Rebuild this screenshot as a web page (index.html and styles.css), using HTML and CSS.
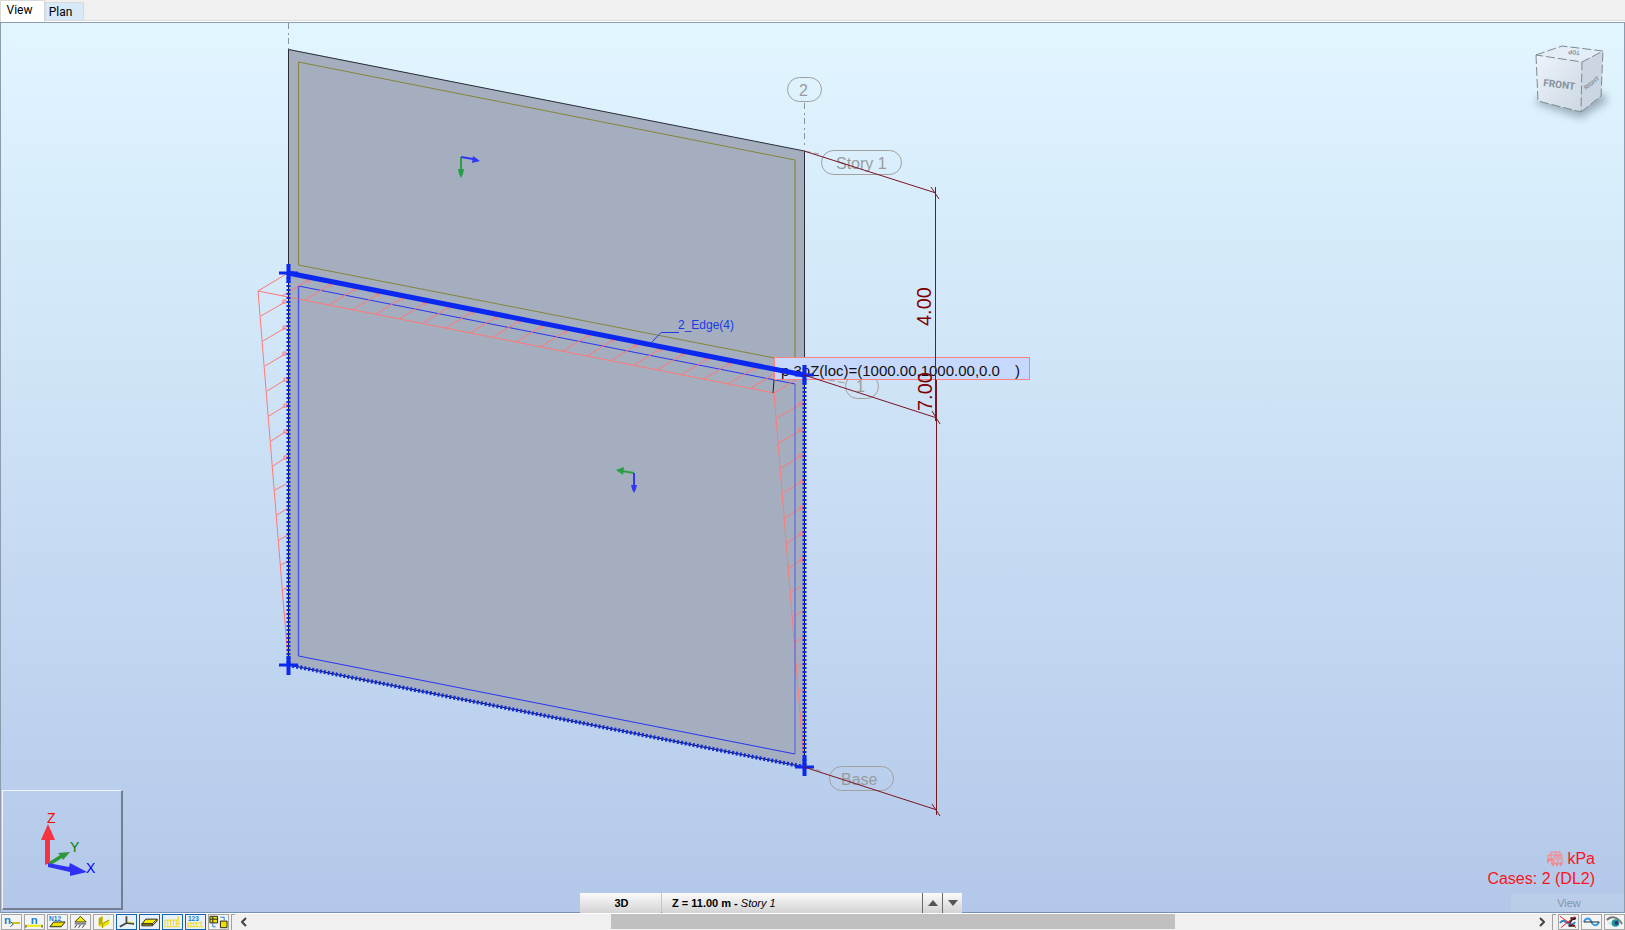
FILE: index.html
```html
<!DOCTYPE html>
<html lang="en">

<head>
    <meta charset="UTF-8">
    <meta name="viewport" content="width=device-width, initial-scale=1.0">
    <title>View</title>
    <link rel="stylesheet" href="styles.css">
</head>

<body>
    <nav class="tabs">
        <button class="tab tab-active">View</button>
        <button class="tab">Plan</button>
    </nav>

    <main class="viewport">
        <svg class="scene" viewBox="1 23 1623 889" preserveAspectRatio="xMinYMin meet">
            <defs>
                <!-- load falling to zero along a vertical edge -->
                <g id="side-load" class="load">
                    <path d="M288 273L258 291L288 660" />
                    <path d="M261 316L285 302M263 341L285 328M265 366L285 354M267 391L285 380M269 416L285 406M271 441L285 432M273 466L285 458M275 490L286 484M277 515L288 508M279 540L288 535M281 565L288 561M283 590L288 587M285 615L288 613" />
                    <path d="M283 300h3v3h-3zM283 326h3v3h-3zM283 352h3v3h-3zM284 378h3v3h-3zM284 404h3v3h-3zM284 430h3v3h-3zM284 456h3v3h-3z" />
                </g>
            </defs>

            <!-- wall panels -->
            <path class="wall" d="M288 49L804 151V767L288 665Z" />
            <path class="wall-edge" d="M288.500 273V49.500L804.500 151V375" />
            <path class="inner-olive" d="M795 160L298.500 62V265L795 362" />
            <path class="inner-olive-soft" d="M795 160V362" />
            <path class="inner-blue" d="M795 384L298.500 286V656L795 754" />

            <!-- grid axes and story labels -->
            <path class="axis-line" d="M288.500 23V49M804.500 103V148" />
            <g class="bubble">
                <rect x="787.500" y="77.500" width="34" height="24" rx="12" />
                <rect x="821.500" y="150.500" width="80" height="24" rx="12" />
                <rect x="845.500" y="374.500" width="33" height="24" rx="12" />
                <rect x="829.500" y="766.500" width="64" height="24" rx="12" />
                <path d="M804 151l15 3M818 378l27 5M806 767l15 4" stroke-dasharray="7 3" />
            </g>
            <g class="bubble-text">
                <text x="799" y="96">2</text>
                <text x="836" y="169">Story 1</text>
                <text x="856" y="392">1</text>
                <text x="841" y="785">Base</text>
            </g>

            <!-- loads -->
            <use href="#side-load" />
            <use href="#side-load" x="516" y="102" />
            <g class="load">
                <path d="M258 291L774 393" />
                <path d="M282 296l28-17m-5 1l5-1-2 4M305 300l28-17m-5 1l5-1-2 4M329 305l28-17m-5 1l5-1-2 4M352 310l28-17m-5 1l5-1-2 4M376 314l28-17m-5 1l5-1-2 4M399 319l28-17m-5 1l5-1-2 4M423 323l28-17m-5 1l5-1-2 4M446 328l28-17m-5 1l5-1-2 4M470 333l28-17m-5 1l5-1-2 4M493 337l28-17m-5 1l5-1-2 4M516 342l28-17m-5 1l5-1-2 4M540 347l28-17m-5 1l5-1-2 4M563 351l28-17m-5 1l5-1-2 4M587 356l28-17m-5 1l5-1-2 4M610 361l28-17m-5 1l5-1-2 4M634 365l28-17m-5 1l5-1-2 4M657 370l28-17m-5 1l5-1-2 4M681 375l28-17m-5 1l5-1-2 4M704 379l28-17m-5 1l5-1-2 4M728 384l28-17m-5 1l5-1-2 4M751 388l28-17" />
            </g>
            <path class="inner-blue-soft" d="M298.500 286V656M795 384V754" />

            <!-- load value -->
            <rect class="load-box" x="774.500" y="357.500" width="255" height="22" />
            <text class="load-text" x="781" y="376">p 3pZ(loc)=(1000.00,1000.00,0.0<tspan x="1015">)</tspan></text>
            <path class="leader" d="M774 380L773 393" />

            <!-- selected edge and supports -->
            <path class="support-core" d="M288.500 273V665L804.500 767V375" />
            <path class="support" d="M288.500 273V665L804.500 767V375" />
            <path class="edge" d="M288 273L804 375" />
            <path class="cross" d="M279 273H298M279 665H298M795 375H814M795 767H814" />
            <path class="cross cross-v" d="M288.500 264V283M288.500 656V675M804.500 365V384M804.500 757V776" />
            <path class="edge-leader" d="M652 342L661 332.500H679" />
            <text class="edge-text" x="678" y="329">2_Edge(4)</text>

            <!-- dimensions -->
            <g class="dim">
                <path d="M804 151L936 193M804 375L937 418M804 767L937 810" />
                <path d="M935.500 187V421M936.500 380V815" />
                <path d="M931 187L939 199M932 411L940 424M932 804L940 816" />
            </g>
            <g class="dim-text">
                <text transform="translate(931 326) rotate(-90)">4.00</text>
                <text transform="translate(932 411) rotate(-90)">7.00</text>
            </g>

            <!-- local axes of the panels -->
            <path class="local-green" d="M461 157V170" />
            <path class="fill-green" d="M458 169h6l-1 5-2 4-2-4z" />
            <path class="local-blue" d="M461 157L473 159" />
            <path class="fill-blue" d="M473 156l7 5-8 2z" />
            <path class="local-green" d="M634 473L622 471" />
            <path class="fill-green" d="M624 467l-8 3 7 5z" />
            <path class="local-blue" d="M634 473V486" />
            <path class="fill-blue" d="M631 485h6l-1 4-2 4-2-4z" />
        </svg>

        <svg class="cube" viewBox="1528 38 88 86">
            <defs>
                <filter id="soft" x="-30%" y="-50%" width="160%" height="200%">
                    <feGaussianBlur stdDeviation="4" />
                </filter>
                <linearGradient id="face" x1="0" y1="0" x2="1" y2="1">
                    <stop offset="0" stop-color="#edf3fa" />
                    <stop offset="1" stop-color="#cdd8e3" />
                </linearGradient>
            </defs>
            <path d="M1535 103L1581 118L1609 100L1595 90L1545 92Z" fill="#7d8f9c" opacity=".7" filter="url(#soft)" />
            <path d="M1536 55L1562 46L1603 51L1582 62Z" fill="#e3edf6" />
            <path d="M1536 55L1582 62L1581 112L1538 101Z" fill="url(#face)" />
            <path d="M1582 62L1603 51L1601 96L1581 112Z" fill="#cbd6e2" />
            <path d="M1536 55L1562 46L1603 51L1582 62ZL1538 101L1581 112L1582 62M1581 112L1601 96L1603 51" fill="none" stroke="#7f8a93" stroke-dasharray="9 3" />
            <text class="cube-front" transform="translate(1543 86) rotate(7)">FRONT</text>
            <text class="cube-side" transform="translate(1586 90) rotate(-38)">RIGHT</text>
            <text class="cube-side" transform="translate(1580 51) rotate(186)">TOP</text>
        </svg>

        <div class="axis-box">
            <svg viewBox="3 791 118 117">
                <path d="M45 865V840H41L48 824L55 840H50V863Z" fill="#f5333f" />
                <path d="M49 862L60 855L58 853L70 852L63 860L62 858L51 865Z" fill="#2f963b" />
                <path d="M48 863L69 867L70 863L87 872L70 876V872L48 867Z" fill="#3030f5" />
                <text x="47" y="823" fill="#f00">Z</text>
                <text x="70" y="852" fill="#008000">Y</text>
                <text x="86" y="873" fill="#00f">X</text>
            </svg>
        </div>

        <div class="units">
            <div class="unit">
                <svg width="16" height="16" viewBox="0 0 16 16" fill="none" stroke="#ff8080">
                    <path d="M1 8V4h3M4 9V1h9v8M4 4h11v8M7 12V4M11 12V4M9 1v8" />
                    <path d="M0 8h3l-2 4zM4 12h3l-1 3zM8 12h3l-1 3zM12 12h3l-1 3zM3 8h3l-1 3z" fill="#ff8080" />
                </svg>
                <span>kPa</span>
            </div>
            <div>Cases: 2 (DL2)</div>
        </div>

        <div class="level-bar">
            <button class="mode">3D</button>
            <button class="level">Z = 11.00 m - <i>Story 1</i></button>
            <button class="step" aria-label="Story up"><svg width="10" height="6"><path d="M0 6L5 0L10 6Z" /></svg></button>
            <button class="step" aria-label="Story down"><svg width="10" height="6"><path d="M0 0H10L5 6Z" /></svg></button>
        </div>
        <button class="view-button">View</button>
    </main>

    <footer class="bottom-bar">
        <div class="tools">
            <button class="tool" aria-label="Node numbers"><svg viewBox="0 0 20 14"><text x="2" y="9" class="glyph">n</text><path d="M9 7l3 2-3 3" stroke="#333" fill="none" /><path d="M11 8h8" stroke="#c8c000" stroke-width="2" /></svg></button>
            <button class="tool" aria-label="Bar numbers"><svg viewBox="0 0 20 14"><text x="6" y="9" class="glyph">n</text><path d="M1 11h17" stroke="#f0e800" stroke-width="2" /><path d="M1 10v3M18 10v3" stroke="#333" /></svg></button>
            <button class="tool" aria-label="Panel numbers"><svg viewBox="0 0 20 14"><text x="1" y="6" class="glyph-small">N12</text><path d="M6 7h12l-4 5H2z" fill="#e8e000" stroke="#222" /></svg></button>
            <button class="tool" aria-label="Supports"><svg viewBox="0 0 20 14"><path d="M10 1l6 6H4z" fill="#f5ec00" stroke="#333" /><path d="M4 9h12M6 10l-2 3M10 10l-2 3M14 10l-2 3" stroke="#333" fill="none" /></svg></button>
            <button class="tool" aria-label="Section shape"><svg viewBox="0 0 20 14"><path d="M5 3l4-2v7l7-4v5l-7 4-4-2z" fill="#f0e400" /><path d="M5 3l4-2v7l-4 3z" fill="#b8ac10" /><path d="M9 13v-4l7-4" stroke="#99900c" fill="none" /></svg></button>
            <button class="tool tool-on" aria-label="Local systems"><svg viewBox="0 0 20 14"><path d="M10 1v7l8 1M10 8l-7 4" stroke="#444" stroke-width="2" fill="none" /><path d="M11 2v5l6 1" stroke="#d8cc10" fill="none" /></svg></button>
            <button class="tool tool-on" aria-label="Panel thickness"><svg viewBox="0 0 20 14"><path d="M6 4h12l-5 5H2zM2 9h11v2H2zM13 11l5-5V4" fill="#f5ec00" stroke="#222" /></svg></button>
            <button class="tool tool-on" aria-label="Load symbols"><svg viewBox="0 0 20 14"><path d="M2 11V5h14V1M5 11V5M8 11V5M11 11V5M14 11V5M16 1v9m-2-2l2 2 2-2M1 12h17" stroke="#f0d820" fill="none" /></svg></button>
            <button class="tool tool-on" aria-label="Load values"><svg viewBox="0 0 20 14"><text x="2" y="6" class="glyph-small">123</text><path d="M2 12V8h14M5 12V8M8 12V8M11 12V8M16 6v6M1 12h17" stroke="#f0d820" fill="none" /></svg></button>
            <button class="tool" aria-label="Display tables"><svg viewBox="0 0 20 14"><path d="M1 1h8v7H1zM1 4h8M4 1v7M12 6h7v7h-7z" fill="#e8e000" stroke="#222" /><path d="M12 2h4v3M7 12H4V9" stroke="#1d7fd0" fill="none" /></svg></button>
            <span class="divider"></span>
        </div>
        <div class="scroll">
            <button class="arrow" aria-label="Scroll left"><svg width="6" height="10"><path d="M5 1L1 5L5 9" /></svg></button>
            <div class="track"><div class="thumb"></div></div>
            <button class="arrow" aria-label="Scroll right"><svg width="6" height="10"><path d="M1 1L5 5L1 9" /></svg></button>
        </div>
        <div class="tools">
            <span class="divider"></span>
            <button class="tool" aria-label="Hide supports"><svg viewBox="0 0 20 14"><path d="M1 8c3-4 5-2 8 0s6 2 8-1" stroke="#2a7fc8" stroke-width="2" fill="none" /><path d="M11 8l3-4h3M12 3h6M10 11h7" stroke="#222" stroke-width="2" fill="none" /><path d="M1 1l17 12M17 1L2 13" stroke="#f01818" fill="none" /></svg></button>
            <button class="tool" aria-label="Deformation"><svg viewBox="0 0 20 14"><path d="M2 7c2-5 6-5 8 0s6 4 8 0" stroke="#3a9be0" stroke-width="2" fill="none" /><path d="M2 7h16" stroke="#222" /></svg></button>
            <button class="tool" aria-label="Visibility"><svg viewBox="0 0 20 14"><path d="M2 5c4-5 11-4 16 4" stroke="#777" stroke-width="2" fill="none" /><path d="M3 8c4-3 9-4 14 1-3 4-9 4-14-1z" fill="#d8e8e8" /><circle cx="11" cy="8" r="4" fill="#1b9a9a" /><circle cx="12" cy="8" r="2" fill="#4a2078" /></svg></button>
        </div>
    </footer>
</body>

</html>
```
FILE: styles.css
```css
* {
    margin: 0;
    padding: 0;
    box-sizing: border-box;
}

body {
    font-family: "Liberation Sans", Arial, sans-serif;
    background-color: #f0f0f0;
    display: flex;
    flex-direction: column;
    height: 100vh;
}

button {
    border: none;
    background: none;
    font-family: inherit;
    cursor: pointer;
}

svg {
    display: block;
}

.tabs {
    display: flex;
    align-items: flex-start;
    height: 22px;
    border-bottom: 1px solid #fff;
    box-shadow: inset 0 -1px #dcdcdc;
}

.tab {
    width: 39px;
    height: 19px;
    margin-top: 2px;
    padding-right: 8px;
    background-color: #d8e9f9;
    border: 1px solid #dadada;
    font-family: Roboto, sans-serif;
    font-size: 12px;
    line-height: 16px;
}

.tab-active {
    width: 45px;
    height: 22px;
    margin-top: 0;
    padding: 0 6px 3px 0;
    background-color: #fff;
    border-bottom: none;
}

.viewport {
    flex: 1;
    position: relative;
    border: 1px solid #8c9cae;
    border-bottom-color: #7890b4;
    background: linear-gradient(#e1f6ff, #b3c8e9);
}

.scene {
    position: absolute;
    inset: 0;
    width: 100%;
    height: 100%;
    fill: none;
}

.wall {
    fill: #a4aebf;
}

.wall-edge {
    stroke: #2a2e34;
}

.inner-olive {
    stroke: #85853a;
}

.inner-olive-soft {
    stroke: #93956a;
    stroke-width: 2;
}

.inner-blue {
    stroke: #2a35f0;
}

.inner-blue-soft {
    stroke: #5f68e6;
    opacity: 0.6;
    stroke-width: 2;
}

.axis-line {
    stroke: #8d9499;
    stroke-dasharray: 6 4 2 3;
}

.bubble {
    stroke: #a2a09e;
}

.bubble-text {
    fill: #999b9c;
    font-size: 16px;
}

.load {
    stroke: #ff7878;
    fill: none;
}

.load-box {
    fill: #c6d8fb;
    stroke: #ff8080;
}

.load-text {
    fill: #111;
    font-size: 15px;
}

.leader {
    stroke: #222;
}

.support-core {
    stroke: #111;
}

.support {
    stroke: #0a28f0;
    stroke-width: 4;
    stroke-dasharray: 2 2;
}

.edge {
    stroke: #0a28f0;
    stroke-width: 5;
}

.cross {
    stroke: #0a28f0;
    stroke-width: 3;
}

.cross-v {
    stroke-width: 4;
}

.edge-leader {
    stroke: #2038e0;
}

.edge-text {
    fill: #1a3ae6;
    font-size: 12px;
}

.dim {
    stroke: #7a1420;
}

.dim-text {
    fill: #800000;
    font-size: 20px;
}

.local-green {
    stroke: #2f9e46;
    stroke-width: 2;
}

.local-blue {
    stroke: #3038f5;
    stroke-width: 2;
}

.fill-green {
    fill: #25a045;
}

.fill-blue {
    fill: #3038f5;
}

.cube {
    position: absolute;
    top: 15px;
    right: 8px;
    width: 88px;
    height: 86px;
}

.cube-front {
    fill: #87919a;
    font-family: Roboto, sans-serif;
    font-size: 10px;
    font-weight: bold;
}

.cube-side {
    fill: #87919a;
    font-family: Roboto, sans-serif;
    font-size: 6px;
    font-weight: bold;
}

.axis-box {
    position: absolute;
    left: 1px;
    bottom: 2px;
    width: 121px;
    height: 120px;
    border: 1px solid #f2f5fb;
    border-right: 2px solid #747e90;
    border-bottom: 2px solid #747e90;
    font-size: 14px;
}

.units {
    position: absolute;
    right: 29px;
    bottom: 23px;
    color: #fb1420;
    font-size: 16px;
    line-height: 20px;
    text-align: right;
}

.unit {
    display: flex;
    justify-content: flex-end;
    align-items: center;
    gap: 4px;
}

.level-bar {
    position: absolute;
    left: 579px;
    bottom: -1px;
    display: flex;
    height: 20px;
}

.level-bar button {
    background: linear-gradient(#fbfbfb, #d3d3d3);
    font-size: 11px;
}

.mode {
    width: 81px;
    padding-left: 2px;
    font-weight: bold;
}

.level {
    width: 260px;
    margin-left: 1px;
    padding-left: 10px;
    text-align: left;
    font-weight: bold;
}

.level i {
    font-weight: normal;
}

.level-bar .step {
    display: flex;
    align-items: center;
    justify-content: center;
    width: 20px;
    border-left: 1px solid #6a6a6a;
    fill: #555;
}

.view-button {
    position: absolute;
    right: 0;
    bottom: 0;
    width: 113px;
    height: 19px;
    padding-left: 3px;
    background-color: rgba(190, 208, 232, 0.6);
    color: #8293ae;
    font-size: 11px;
}

.bottom-bar {
    display: flex;
    height: 17px;
    border-top: 1px solid #fff;
}

.tools {
    display: flex;
    gap: 2px;
    padding-left: 1px;
}

.tool {
    width: 21px;
    height: 16px;
    border: 1px solid #a6a6a6;
    background-color: #f4f4f4;
}

.tool-on {
    border-color: #1464b4;
    background-color: #e8f0f8;
}

.tool svg {
    width: 19px;
    height: 14px;
    overflow: visible;
}

.glyph {
    fill: #1d7fd0;
    font-size: 12px;
    font-weight: bold;
}

.glyph-small {
    fill: #1d7fd0;
    font-size: 7px;
    font-weight: bold;
}

.divider {
    width: 4px;
    border-left: 1px solid #a0a0a0;
    border-top: 1px solid #a0a0a0;
}

.scroll {
    flex: 1;
    display: flex;
}

.arrow {
    display: flex;
    align-items: center;
    justify-content: center;
    width: 18px;
    fill: none;
    stroke: #444;
    stroke-width: 2;
}

.track {
    flex: 1;
}

.thumb {
    width: 44%;
    height: 15px;
    margin-left: 28%;
    background-color: #c0c0c0;
}
```
